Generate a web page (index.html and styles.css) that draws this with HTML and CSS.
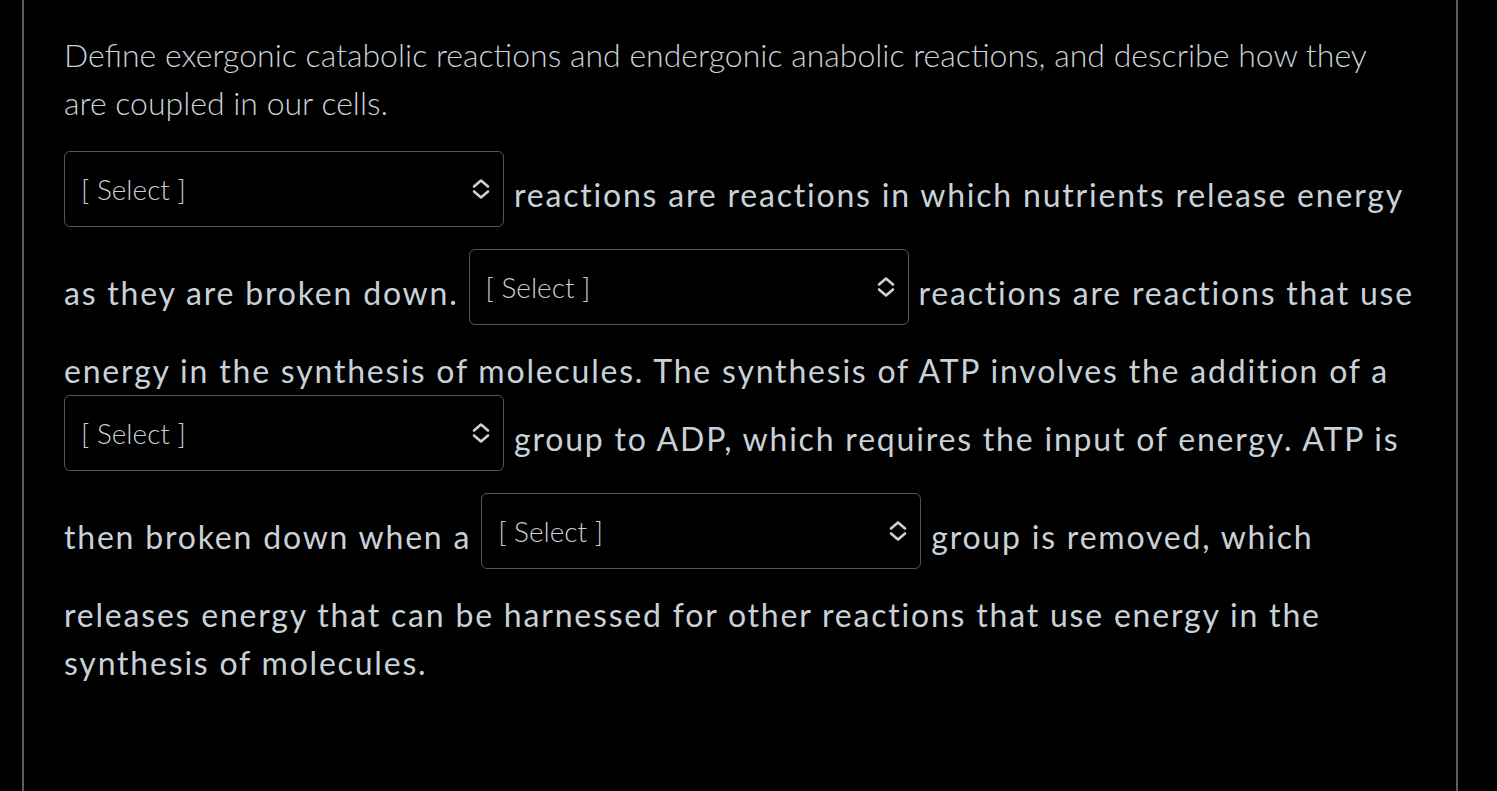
FILE: index.html
```html
<!DOCTYPE html>
<html lang="en">
<head>
<meta charset="utf-8">
<title>Question</title>
<link rel="stylesheet" href="styles.css">
</head>
<body>
<div class="panel">
  <p class="question">Define exergonic catabolic reactions and endergonic anabolic reactions, and describe how they are coupled in our cells.</p>
  <p class="answer"><span class="select"><span class="label">[ Select ]</span><svg class="chev" width="20" height="22" viewBox="0 0 20 22"><path d="M3 8.5 L10 2.5 L17 8.5 M3 13.5 L10 19.5 L17 13.5" fill="none" stroke="#c9d1d8" stroke-width="2.6" stroke-linecap="round" stroke-linejoin="round"/></svg></span> reactions are reactions in which nutrients release energy as they are broken down. <span class="select"><span class="label">[ Select ]</span><svg class="chev" width="20" height="22" viewBox="0 0 20 22"><path d="M3 8.5 L10 2.5 L17 8.5 M3 13.5 L10 19.5 L17 13.5" fill="none" stroke="#c9d1d8" stroke-width="2.6" stroke-linecap="round" stroke-linejoin="round"/></svg></span> reactions are reactions that use energy in the synthesis of molecules. The synthesis of ATP involves the addition of a <span class="select"><span class="label">[ Select ]</span><svg class="chev" width="20" height="22" viewBox="0 0 20 22"><path d="M3 8.5 L10 2.5 L17 8.5 M3 13.5 L10 19.5 L17 13.5" fill="none" stroke="#c9d1d8" stroke-width="2.6" stroke-linecap="round" stroke-linejoin="round"/></svg></span> group to ADP, which requires the input of energy. ATP is then broken down when a <span class="select"><span class="label">[ Select ]</span><svg class="chev" width="20" height="22" viewBox="0 0 20 22"><path d="M3 8.5 L10 2.5 L17 8.5 M3 13.5 L10 19.5 L17 13.5" fill="none" stroke="#c9d1d8" stroke-width="2.6" stroke-linecap="round" stroke-linejoin="round"/></svg></span> group is removed, which releases energy that can be harnessed for other reactions that use energy in the synthesis of molecules.</p>
</div>
</body>
</html>
```

FILE: styles.css
```css
html, body {
  margin: 0;
  padding: 0;
  background: #000;
  height: 100%;
  overflow: hidden;
}
body {
  font-family: Lato, "Open Sans", sans-serif;
  color: #c9d1d8;
}
.panel {
  margin-left: 22px;
  width: 1352px;
  min-height: 100%;
  box-sizing: content-box;
  border-left: 2px solid #5c5c5c;
  border-right: 2px solid #5c5c5c;
  padding: 31px 40px 0 40px;
}
.question {
  margin: 0 0 24px 0;
  font-size: 32px;
  font-weight: 300;
  line-height: 48px;
}
.answer {
  margin: 0;
  font-size: 32px;
  font-weight: 400;
  line-height: 48px;
  letter-spacing: 1.8px;
}
.select {
  display: inline-flex;
  align-items: center;
  justify-content: space-between;
  box-sizing: border-box;
  width: 440px;
  height: 76px;
  margin-bottom: 22px;
  padding: 0 12px 0 16px;
  border: 1.5px solid #555;
  border-radius: 6px;
  vertical-align: 7px;
  letter-spacing: 0;
}
.label {
  font-size: 28px;
  font-weight: 300;
  line-height: 36px;
  color: #c9d1d8;
}
.chev {
  display: block;
  flex: none;
}
```
